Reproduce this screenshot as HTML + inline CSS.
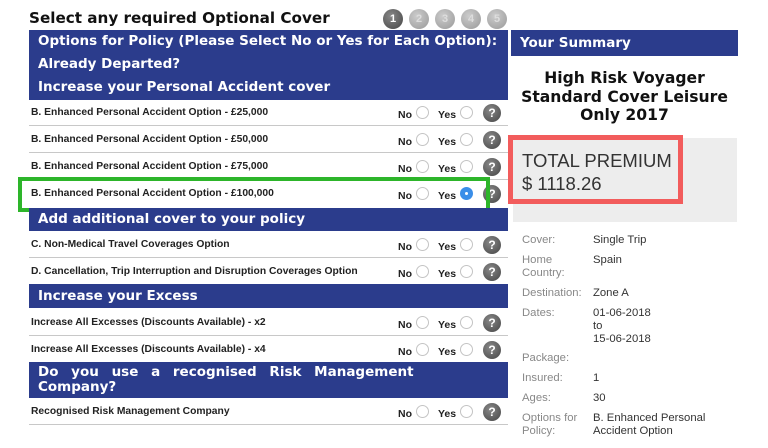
<!DOCTYPE html>
<html><head><meta charset="utf-8"><style>
*{margin:0;padding:0;box-sizing:border-box}
body{width:768px;height:448px;background:#fff;position:relative;overflow:hidden;font-family:"Liberation Sans",Arial,sans-serif}
.a{position:absolute}
.blue{position:absolute;left:29px;width:479px;background:#2b3c8c;color:#fff;font-family:"DejaVu Sans",sans-serif;font-weight:bold;font-size:13.5px;padding-left:9px}
.row{position:absolute;left:29px;width:479px;height:27px;border-bottom:1px solid #c8c8c8;font-size:10.3px;font-weight:bold;color:#222;line-height:28px;padding-left:2px}
.opt{position:absolute;right:0;top:0;height:26px;width:110px}
.opt span{position:absolute;top:2px;font-size:10.5px}
.rad{position:absolute;top:7px;width:13px;height:13px;border-radius:50%;border:1px solid #c4c4c4;background:#fff}
.q{position:absolute;top:5px;right:7px;width:18px;height:18px;border-radius:50%;background:radial-gradient(circle at 40% 35%,#888,#444);color:#fff;font-size:12px;line-height:18px;text-align:center}
.lbl{position:absolute;left:522px;color:#888;font-size:11.3px;line-height:13px}
.val{position:absolute;left:593px;color:#333;font-size:11.3px;line-height:13px}
.num{position:absolute;top:9px;width:20px;height:20px;border-radius:50%;background:radial-gradient(circle at 40% 35%,#ccc,#999);color:#ddd;font-size:11px;font-weight:bold;text-align:center;line-height:20px}
</style></head><body>
<div class="a" style="left:29px;top:9px;font-family:'DejaVu Sans',sans-serif;font-weight:bold;font-size:15.2px;color:#111">Select any required Optional Cover</div>
<div class="num" style="left:383px;background:radial-gradient(circle at 40% 35%,#888,#444);color:#fff">1</div>
<div class="num" style="left:409px">2</div>
<div class="num" style="left:435px">3</div>
<div class="num" style="left:461px">4</div>
<div class="num" style="left:487px">5</div>

<div class="blue" style="top:30px;height:70px;line-height:23px;padding-top:0">Options for Policy (Please Select No or Yes for Each Option):<br>Already Departed?<br>Increase your Personal Accident cover</div>

<div class="row" style="top:99px">B. Enhanced Personal Accident Option - £25,000<div class="opt"><span style="left:0">No</span><div class="rad" style="left:18px"></div><span style="left:40px">Yes</span><div class="rad" style="left:62px"></div><div class="q">?</div></div></div>
<div class="row" style="top:126px">B. Enhanced Personal Accident Option - £50,000<div class="opt"><span style="left:0">No</span><div class="rad" style="left:18px"></div><span style="left:40px">Yes</span><div class="rad" style="left:62px"></div><div class="q">?</div></div></div>
<div class="row" style="top:153px">B. Enhanced Personal Accident Option - £75,000<div class="opt"><span style="left:0">No</span><div class="rad" style="left:18px"></div><span style="left:40px">Yes</span><div class="rad" style="left:62px"></div><div class="q">?</div></div></div>
<div class="row" style="top:180px;border:none">B. Enhanced Personal Accident Option - £100,000<div class="opt"><span style="left:0">No</span><div class="rad" style="left:18px"></div><span style="left:40px">Yes</span><div class="rad" style="left:62px;background:#3a8ee8;border-color:#3a8ee8"><div style="position:absolute;left:4px;top:4px;width:3px;height:3px;background:#fff;border-radius:50%"></div></div><div class="q">?</div></div></div>
<div class="a" style="left:18px;top:177px;width:472px;height:35px;border:4px solid #2db52a"></div>

<div class="blue" style="top:208px;height:23px;line-height:22px">Add additional cover to your policy</div>
<div class="row" style="top:231px">C. Non-Medical Travel Coverages Option<div class="opt"><span style="left:0">No</span><div class="rad" style="left:18px"></div><span style="left:40px">Yes</span><div class="rad" style="left:62px"></div><div class="q">?</div></div></div>
<div class="row" style="top:258px;border:none">D. Cancellation, Trip Interruption and Disruption Coverages Option<div class="opt"><span style="left:0">No</span><div class="rad" style="left:18px"></div><span style="left:40px">Yes</span><div class="rad" style="left:62px"></div><div class="q">?</div></div></div>
<div class="blue" style="top:284px;height:24px;line-height:24px">Increase your Excess</div>
<div class="row" style="top:309px">Increase All Excesses (Discounts Available) - x2<div class="opt"><span style="left:0">No</span><div class="rad" style="left:18px"></div><span style="left:40px">Yes</span><div class="rad" style="left:62px"></div><div class="q">?</div></div></div>
<div class="row" style="top:336px;border:none">Increase All Excesses (Discounts Available) - x4<div class="opt"><span style="left:0">No</span><div class="rad" style="left:18px"></div><span style="left:40px">Yes</span><div class="rad" style="left:62px"></div><div class="q">?</div></div></div>
<div class="blue" style="top:362px;height:36px;line-height:15px;padding-top:3px;word-spacing:8px">Do you use a recognised Risk Management<br><span style="word-spacing:0">Company?</span></div>
<div class="row" style="top:398px">Recognised Risk Management Company<div class="opt"><span style="left:0">No</span><div class="rad" style="left:18px"></div><span style="left:40px">Yes</span><div class="rad" style="left:62px"></div><div class="q">?</div></div></div>

<div class="a" style="left:511px;top:30px;width:227px;height:26px;background:#2b3c8c;color:#fff;font-family:'DejaVu Sans',sans-serif;font-weight:bold;font-size:13.5px;line-height:26px;padding-left:9px">Your Summary</div>
<div class="a" style="left:509px;top:69px;width:231px;text-align:center;font-family:'DejaVu Sans',sans-serif;font-weight:bold;font-size:15.6px;line-height:18.5px;color:#111">High Risk Voyager<br>Standard Cover Leisure<br>Only 2017</div>
<div class="a" style="left:513px;top:138px;width:224px;height:84px;background:#ededed"></div>
<div class="a" style="left:508px;top:135px;width:175px;height:69px;border:5px solid #f25c5c;background:#ededed"></div>
<div class="a" style="left:522px;top:149px;font-size:18.5px;color:#333;line-height:23px">TOTAL PREMIUM<br>$ 1118.26</div>

<div class="lbl" style="top:234px">Cover:</div><div class="val" style="top:234px">Single Trip</div>
<div class="lbl" style="top:254px">Home<br>Country:</div><div class="val" style="top:254px">Spain</div>
<div class="lbl" style="top:287px">Destination:</div><div class="val" style="top:287px">Zone A</div>
<div class="lbl" style="top:307px">Dates:</div><div class="val" style="top:307px">01-06-2018<br>to<br>15-06-2018</div>
<div class="lbl" style="top:352px">Package:</div>
<div class="lbl" style="top:372px">Insured:</div><div class="val" style="top:372px">1</div>
<div class="lbl" style="top:392px">Ages:</div><div class="val" style="top:392px">30</div>
<div class="lbl" style="top:412px">Options for<br>Policy:</div><div class="val" style="top:412px">B. Enhanced Personal<br>Accident Option</div>
</body></html>
